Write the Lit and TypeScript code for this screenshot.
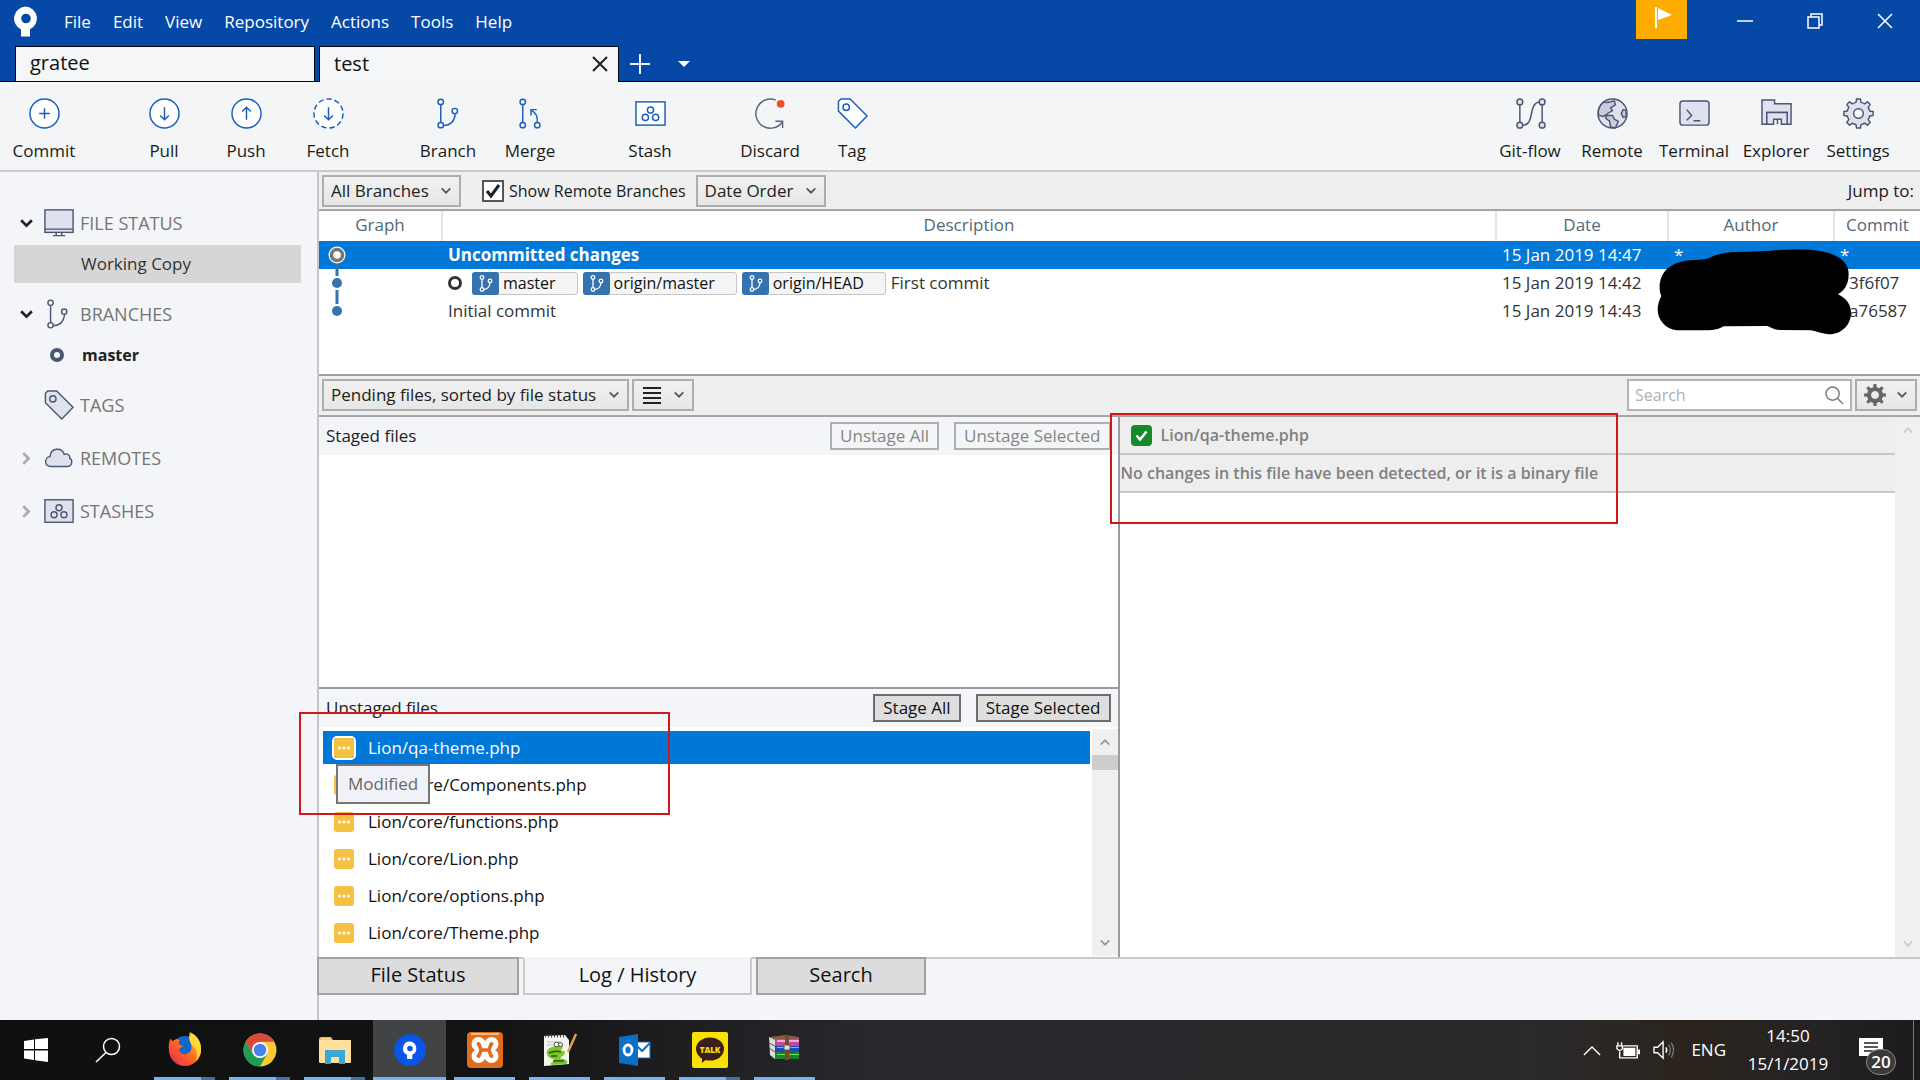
import { LitElement, html, svg, css, nothing } from "lit";
import { customElement, property } from "lit/decorators.js";
import { classMap } from "lit/directives/class-map.js";

/* ---------- icons ---------- */

const gearPath = (cx: number, cy: number, outer: number, inner: number, teeth: number) => {
  const step = (Math.PI * 2) / teeth;
  const at = (r: number, a: number) => `${(cx + r * Math.sin(a)).toFixed(2)} ${(cy - r * Math.cos(a)).toFixed(2)}`;
  let d = "";
  for (let i = 0; i < teeth; i++) {
    const a = i * step;
    d += `${i ? "L" : "M"}${at(inner, a - step * 0.28)}L${at(outer, a - step * 0.17)}L${at(outer, a + step * 0.17)}L${at(inner, a + step * 0.28)}`;
    d += `A${inner} ${inner} 0 0 1 ${at(inner, a + step * 0.72)}`;
  }
  return d + "Z";
};

const stashDots = svg`<circle cx="16" cy="12.5" r="3.2"/><circle cx="10.7" cy="20" r="3.2"/><circle cx="21.3" cy="20" r="3.2"/>`;
const branchShape = svg`<path d="M6 6.5v19M9 28.500c7 0 11-5 12-11.500"/><circle cx="6" cy="4" r="2.800"/><circle cx="6" cy="28" r="2.800"/><circle cx="20.500" cy="13.500" r="2.800"/>`;
const tagShape = svg`<path d="M1.500 3.500 4 1h9.500L31 18.500 19 31 1.500 13.500Z"/><circle cx="9.500" cy="9.500" r="3.300"/>`;

const icons: Record<string, unknown> = {
  commit: svg`<circle cx="16" cy="16" r="15" fill="#fff"/><path d="M16 10.500v11M10.500 16h11"/>`,
  pull: svg`<circle cx="16" cy="16" r="15" fill="#fff"/><path d="M16 9.500v13M11.500 18l4.500 4.500 4.500-4.500"/>`,
  push: svg`<circle cx="16" cy="16" r="15" fill="#fff"/><path d="M16 22.500v-13M11.500 14l4.500-4.500 4.500 4.500"/>`,
  fetch: svg`<circle cx="16" cy="16" r="15" fill="#fff" stroke-dasharray="5.500 3"/><path d="M16 9.500v13M11.500 18l4.500 4.500 4.500-4.500"/>`,
  branch: svg`<g transform="translate(2 0)">${branchShape}</g>`,
  merge: svg`<path d="M8 7v18M23 25C23.500 19 21 15 17.500 13M16.500 18v-6h6"/><circle cx="8" cy="4" r="2.800"/><circle cx="8" cy="28" r="2.800"/><circle cx="23" cy="28" r="2.800"/>`,
  stash: svg`<rect x="1" y="4" width="30" height="24" fill="#fff"/>${stashDots}`,
  discard: svg`<path stroke="#5a6478" d="M21.500 2.200A15 15 0 1 0 28 25M21 24h7.500v7"/><circle cx="26.500" cy="6" r="4" fill="#f04e23" stroke="none"/>`,
  tag: svg`<g fill="#fff">${tagShape}</g>`,
  gitflow: svg`<path d="M5 7v18M28 7v18M8 28c13 0 5-22 17-24"/><g fill="#dde2ee"><circle cx="5" cy="4" r="3"/><circle cx="5" cy="28" r="3"/><circle cx="28" cy="4" r="3"/><circle cx="28" cy="28" r="3"/></g>`,
  remote: svg`<circle cx="16" cy="16" r="15" fill="#dde2ee"/><path fill="#c6cede" d="M7 4c4 2 8-1 11-1l1 4-5 3 2 3-5 3-4 3-5-1C0 13 3 7 7 4ZM10 18l6 0 2 4 4 2-3 7-5-1-1-6-4-3ZM30 13l-3-1-2 4 2 4 3-1Z"/>`,
  terminal: svg`<rect x="1" y="3" width="30" height="25" rx="3" fill="#dde2ee"/><path d="M8 12l5 6-5 5M15 23.500h7"/>`,
  explorer: svg`<path fill="#dde2ee" d="M1 27V2h13v4h17v21h-4V15H6v12Z"/><path fill="#dde2ee" d="M6 15h21v12h-6v-5h-8v5H6Z"/><path d="M17 22v5"/>`,
  settings: svg`<path fill="#dde2ee" stroke-linejoin="round" d=${gearPath(16, 16, 15.2, 11.8, 8)}/><circle cx="16" cy="16" r="5" fill="#f4f6f8"/>`,
  monitor: svg`<rect x="1" y="2" width="30" height="24" fill="#dde2ee"/><path d="M1 22.500h30M13 26v3M19 26v3M9.500 29.500h13"/>`,
  sideBranch: svg`<g fill="none" transform="translate(1 0)">${branchShape}</g>`,
  sideTag: svg`<g fill="#dde2ee">${tagShape}</g>`,
  cloud: svg`<path fill="#dde2ee" d="M7.500 25C0 25 0 15 6.500 14.500 7 5 19 4 21.500 12 26 10.500 28 14 27.500 16.500 31 18 30 25 25.500 25Z"/>`,
  sideStash: svg`<rect x="1" y="4" width="30" height="24" fill="#dde2ee"/>${stashDots}`,
};

const icon = (name: string) => html`<svg class="icon" viewBox="0 0 32 32" aria-hidden="true">${icons[name]}</svg>`;

const chevron = (dir: "down" | "up" | "right" = "down") => {
  const d = { down: "M2 4l5 5 5-5", up: "M2 10l5-5 5 5", right: "M4 2l5 5-5 5" }[dir];
  return html`<svg class="chev" viewBox="0 0 14 14" aria-hidden="true"><path d=${d} /></svg>`;
};

const logoShape = svg`<path fill-rule="evenodd" d="M12 0a12 12 0 0 0-5 22.900V30h9v-7.200A12 12 0 0 0 12 0Zm0 7.200a4.800 4.800 0 1 1 0 9.600 4.800 4.800 0 0 1 0-9.600Z"/>`;

/* ---------- shared styles ---------- */

const base = css`
  * {
    box-sizing: border-box;
  }
  button,
  input,
  select {
    font: inherit;
    color: inherit;
    margin: 0;
    padding: 0;
    border: 0;
    background: none;
  }
  ul {
    list-style: none;
    margin: 0;
    padding: 0;
  }
  .icon {
    width: 31px;
    height: 31px;
    fill: none;
    stroke: currentColor;
    stroke-width: 1.5;
    display: block;
    overflow: visible;
  }
  .chev {
    width: 12px;
    height: 12px;
    fill: none;
    stroke: currentColor;
    stroke-width: 2;
    display: block;
  }
`;

/* ---------- title bar ---------- */

@customElement("title-bar")
class TitleBar extends LitElement {
  static styles = [
    base,
    css`
      :host {
        display: block;
        background: #0648a6;
        color: #fff;
      }
      .top {
        display: flex;
        height: 46px;
        align-items: flex-start;
      }
      .logo {
        width: 24px;
        height: 31px;
        margin: 6px 15px 0 14px;
        fill: #fff;
      }
      nav {
        display: flex;
        flex: 1;
        height: 46px;
        align-items: center;
        padding-bottom: 2px;
      }
      nav button {
        padding: 0 11px;
      }
      .flag {
        width: 51px;
        height: 39px;
        background: #ffac00;
      }
      .flag svg {
        width: 51px;
        height: 39px;
        display: block;
      }
      .win {
        width: 70px;
        height: 42px;
        display: grid;
        place-items: center;
      }
      .windows {
        display: flex;
        padding-left: 23px;
      }
      .windows svg {
        width: 16px;
        height: 16px;
        fill: none;
        stroke: #fff;
        stroke-width: 1.5;
      }
      .tabs {
        display: flex;
        height: 36px;
        padding-left: 15px;
        gap: 4px;
        background: linear-gradient(#000, #000) bottom / 100% 1px no-repeat;
      }
      .tab {
        width: 300px;
        display: flex;
        align-items: center;
        justify-content: space-between;
        padding: 0 10px 2px 14px;
        border: 1px solid #000814;
        background: #f4f6f8;
        color: #111;
        font-size: 20px;
      }
      .tab.on {
        border-bottom: 0;
      }
      .tab svg {
        width: 16px;
        height: 16px;
        stroke: #222;
        stroke-width: 2;
        display: block;
      }
      .add {
        width: 34px;
        display: grid;
        place-items: center;
      }
      .add svg {
        width: 20px;
        height: 20px;
        stroke: #e8f4ff;
        stroke-width: 2;
      }
      .add.more {
        width: 46px;
      }
      .add.more svg {
        width: 12px;
        height: 8px;
        fill: #fff;
        stroke: none;
      }
    `,
  ];
  render() {
    return html`
      <div class="top">
        <svg class="logo" viewBox="0 0 24 30" aria-hidden="true">${logoShape}</svg>
        <nav>
          ${["File", "Edit", "View", "Repository", "Actions", "Tools", "Help"].map((m) => html`<button>${m}</button>`)}
        </nav>
        <button class="flag" aria-label="Notifications">
          <svg viewBox="0 0 51 39"><path d="M19 7h2v21h-2zM22 8l14 7-14 5z" fill="#fff" /></svg>
        </button>
        <div class="windows">
          <button class="win" aria-label="Minimize"><svg viewBox="0 0 16 16"><path d="M0 8h16" /></svg></button>
          <button class="win" aria-label="Restore"><svg viewBox="0 0 16 16"><path d="M1 4h11v11H1zM4 4V1h11v11h-3" /></svg></button>
          <button class="win" aria-label="Close"><svg viewBox="0 0 16 16"><path d="M1 1l14 14M15 1L1 15" /></svg></button>
        </div>
      </div>
      <div class="tabs">
        <div class="tab"><span>gratee</span></div>
        <div class="tab on">
          <span>test</span>
          <button aria-label="Close tab"><svg viewBox="0 0 16 16"><path d="M1 1l14 14M15 1L1 15" /></svg></button>
        </div>
        <button class="add" aria-label="New tab"><svg viewBox="0 0 20 20"><path d="M10 0v20M0 10h20" /></svg></button>
        <button class="add more" aria-label="Tab list"><svg viewBox="0 0 12 8"><path d="M0 1h12L6 7z" /></svg></button>
      </div>
    `;
  }
}

/* ---------- toolbar ---------- */

type Tool = [string, string];
const leftTools: Tool[][] = [
  [["commit", "Commit"]],
  [["pull", "Pull"], ["push", "Push"], ["fetch", "Fetch"]],
  [["branch", "Branch"], ["merge", "Merge"]],
  [["stash", "Stash"]],
  [["discard", "Discard"], ["tag", "Tag"]],
];
const rightTools: Tool[] = [
  ["gitflow", "Git-flow"],
  ["remote", "Remote"],
  ["terminal", "Terminal"],
  ["explorer", "Explorer"],
  ["settings", "Settings"],
];

@customElement("tool-bar")
class ToolBar extends LitElement {
  static styles = [
    base,
    css`
      :host {
        display: flex;
        justify-content: space-between;
        padding: 16px 21px 6px 3px;
        border-bottom: 2px solid #c8cacc;
        background: #f3f5f7;
      }
      .left {
        display: flex;
        gap: 38px;
      }
      .group {
        display: flex;
      }
      button {
        width: 82px;
        display: flex;
        flex-direction: column;
        align-items: center;
        gap: 9px;
        line-height: 26px;
        white-space: nowrap;
      }
      .icon {
        color: #1a5dbb;
      }
      .right .icon {
        color: #4b5670;
      }
    `,
  ];
  tool = ([name, label]: Tool) => html`<button>${icon(name)}<span>${label}</span></button>`;
  render() {
    return html`
      <div class="left">${leftTools.map((g) => html`<div class="group">${g.map(this.tool)}</div>`)}</div>
      <div class="group right">${rightTools.map(this.tool)}</div>
    `;
  }
}

/* ---------- sidebar ---------- */

@customElement("side-bar")
class SideBar extends LitElement {
  static styles = [
    base,
    css`
      :host {
        display: flex;
        flex-direction: column;
        padding: 29px 16px 0 14px;
        background: #f3f5f8;
        border-right: 2px solid #c4c6c9;
      }
      .head {
        display: grid;
        grid-template-columns: 24px 30px auto;
        column-gap: 6px;
        align-items: center;
        justify-items: center;
        justify-content: start;
        height: 44px;
        color: #757575;
        font-size: 18px;
        font-weight: 500;
      }
      .head .icon {
        width: 30px;
        height: 30px;
        color: #4b5670;
      }
      .chev {
        width: 15px;
        height: 15px;
        color: #aaa;
        stroke-width: 2.5;
      }
      .open .chev {
        color: #222;
      }
      .item {
        display: flex;
        align-items: center;
        width: 100%;
        height: 38px;
        padding-left: 67px;
        color: #333;
      }
      .on {
        background: #d6d6d6;
      }
      .current {
        font-size: 16px;
        font-weight: 700;
        color: #222;
        gap: 18px;
        padding-left: 36px;
      }
      .ring {
        width: 14px;
        height: 14px;
        border: 4px solid #4b5670;
        border-radius: 50%;
      }
      .section {
        margin-bottom: 9px;
      }
    `,
  ];
  section(name: string, label: string, state: "open" | "closed" | "none", body: unknown = nothing) {
    return html`<div class=${classMap({ section: true, open: state === "open" })}>
      <button class="head">
        <span>${state === "none" ? nothing : chevron(state === "open" ? "down" : "right")}</span>
        ${icon(name)}<span>${label}</span>
      </button>
      ${body}
    </div>`;
  }
  render() {
    return html`
      ${this.section("monitor", "FILE STATUS", "open", html`<button class="item on">Working Copy</button>`)}
      ${this.section("sideBranch", "BRANCHES", "open", html`<button class="item current"><span class="ring"></span>master</button>`)}
      ${this.section("sideTag", "TAGS", "none")} ${this.section("cloud", "REMOTES", "closed")}
      ${this.section("sideStash", "STASHES", "closed")}
    `;
  }
}

/* ---------- drop-down ---------- */

@customElement("drop-down")
class DropDown extends LitElement {
  @property() label = "";
  @property() value = "";
  static styles = [
    base,
    css`
      :host {
        display: grid;
        align-items: center;
      }
      select,
      .chev {
        grid-area: 1 / 1;
      }
      select {
        appearance: none;
        height: 32px;
        padding: 0 30px 0 7px;
        border: 2px solid #adadad;
        background: linear-gradient(#f1f1f1, #e6e6e6);
        color: #222;
      }
      .chev {
        justify-self: end;
        margin-right: 9px;
        pointer-events: none;
        color: #555;
      }
    `,
  ];
  render() {
    return html`<select aria-label=${this.label}><option>${this.value}</option></select>${chevron()}`;
  }
}

/* ---------- commit log ---------- */

@customElement("commit-log")
class CommitLog extends LitElement {
  static styles = [
    base,
    css`
      :host {
        display: block;
      }
      .filters {
        display: flex;
        align-items: center;
        height: 39px;
        padding: 0 6px 0 3px;
        background: #efefef;
        border-bottom: 2px solid #a5a5a5;
      }
      .check {
        display: flex;
        align-items: center;
        gap: 5px;
        margin: 0 10px 0 21px;
        font-size: 16px;
      }
      .check input {
        appearance: none;
        width: 22px;
        height: 22px;
        border: 2px solid #555;
        background: #fff;
      }
      .box {
        display: grid;
      }
      .box > * {
        grid-area: 1 / 1;
      }
      .box svg {
        width: 22px;
        height: 22px;
        fill: none;
        stroke: #222;
        stroke-width: 3;
        pointer-events: none;
      }
      .jump {
        margin-left: auto;
      }
      .log {
        position: relative;
        height: 165px;
        background: #fff;
        border-bottom: 2px solid #a0a0a0;
      }
      table {
        width: 100%;
        table-layout: fixed;
        border-collapse: collapse;
        color: #333;
      }
      .c-graph { width: 123px; }
      .c-date { width: 172px; }
      .c-author { width: 166px; }
      .c-commit { width: 86px; }
      th {
        height: 30px;
        padding: 0 0 2px;
        font-weight: 400;
        color: #51687a;
        border-right: 2px solid #e3e6e8;
      }
      th:last-child {
        border-right: 0;
      }
      td {
        height: 28px;
        padding: 0 0 0 6px;
        white-space: nowrap;
        line-height: 24px;
      }
      .sel {
        background: #0078d7;
        color: #fff;
      }
      .sel b {
        font-weight: 700;
      }
      .g {
        padding: 0;
      }
      .g svg {
        width: 36px;
        height: 28px;
        display: block;
      }
      .tail {
        padding-left: 15px;
      }
      .refs {
        display: flex;
        align-items: center;
        gap: 5px;
      }
      .head {
        width: 14px;
        height: 14px;
        border: 3px solid #333;
        border-radius: 50%;
        margin-right: 5px;
      }
      .ref {
        display: flex;
        align-items: center;
        height: 23px;
        padding-right: 21px;
        gap: 4px;
        border: 1px solid #c6c6c6;
        border-radius: 3px;
        background: #f5f5f5;
        color: #111;
        font-size: 16px;
      }
      .ref svg {
        width: 27px;
        height: 23px;
        margin-left: -1px;
        border-radius: 3px;
        background: #3572b0;
        fill: none;
        stroke: #fff;
        stroke-width: 1.3;
      }
      .scribble {
        position: absolute;
        right: 68px;
        top: 38px;
        width: 195px;
        height: 86px;
      }
    `,
  ];
  ref(name: string) {
    return html`<span class="ref"
      ><svg viewBox="0 0 27 23" aria-hidden="true">
        <path d="M10 7v9M11.500 17.500c4 0 6-3 6.500-6.500" />
        <circle cx="10" cy="5.500" r="1.800" /><circle cx="10" cy="17.500" r="1.800" /><circle cx="18" cy="9" r="1.800" /></svg
      >${name}</span
    >`;
  }
  render() {
    return html`
      <div class="filters">
        <drop-down label="Branches" value="All Branches"></drop-down>
        <label class="check"
          ><span class="box"
            ><input type="checkbox" checked /><svg viewBox="0 0 22 22"><path d="M5 11l4 5 8-11" /></svg></span
          >Show Remote Branches</label
        >
        <drop-down label="Order" value="Date Order"></drop-down>
        <span class="jump">Jump to:</span>
      </div>
      <div class="log">
        <table>
          <colgroup>
            <col class="c-graph" /><col /><col class="c-date" /><col class="c-author" /><col class="c-commit" />
          </colgroup>
          <thead>
            <tr><th>Graph</th><th>Description</th><th>Date</th><th>Author</th><th>Commit</th></tr>
          </thead>
          <tbody>
            <tr class="sel">
              <td class="g">
                <svg viewBox="0 0 36 28"><path d="M18 20v8" stroke="#3572b0" stroke-width="3" /><circle cx="18" cy="14" r="6" fill="#fff" stroke="#fff" stroke-width="5" /><circle cx="18" cy="14" r="5.500" fill="#fff" stroke="#777" stroke-width="3.500" /></svg>
              </td>
              <td><b>Uncommitted changes</b></td>
              <td>15 Jan 2019 14:47</td>
              <td>*</td>
              <td>*</td>
            </tr>
            <tr>
              <td class="g">
                <svg viewBox="0 0 36 28"><path d="M18 0v7M18 21v7" stroke="#3572b0" stroke-width="3" /><circle cx="18" cy="14" r="5" fill="#3572b0" /></svg>
              </td>
              <td>
                <div class="refs"><span class="head"></span>${["master", "origin/master", "origin/HEAD"].map(this.ref)}<span>First commit</span></div>
              </td>
              <td>15 Jan 2019 14:42</td>
              <td></td>
              <td class="tail">3f6f07</td>
            </tr>
            <tr>
              <td class="g">
                <svg viewBox="0 0 36 28"><path d="M18 0v7" stroke="#3572b0" stroke-width="3" /><circle cx="18" cy="14" r="5" fill="#3572b0" /></svg>
              </td>
              <td>Initial commit</td>
              <td>15 Jan 2019 14:43</td>
              <td></td>
              <td class="tail">a76587</td>
            </tr>
          </tbody>
        </table>
        <svg class="scribble" viewBox="650 148 585 258" aria-hidden="true">
          <path
            d="M658 265C658 215 690 190 745 182C770 180 790 181 805 176C840 158 870 156 920 156C960 154 980 156 1000 152C1040 149 1070 149 1110 150C1180 156 1225 180 1225 222C1225 255 1212 272 1193 284C1225 300 1232 320 1232 342C1230 380 1200 404 1165 404C1145 402 1130 396 1112 392L1020 391C1000 390 992 383 980 379L850 380C838 386 830 391 805 392L710 392C675 388 652 360 652 330C652 315 657 300 663 290C660 282 658 275 658 265Z"
          />
        </svg>
      </div>
    `;
  }
}

/* ---------- changed files + diff ---------- */

const unstaged = ["Lion/qa-theme.php", "Lion/core/Components.php", "Lion/core/functions.php", "Lion/core/Lion.php", "Lion/core/options.php", "Lion/core/Theme.php"];

@customElement("file-panes")
class FilePanes extends LitElement {
  static styles = [
    base,
    css`
      :host {
        display: flex;
        flex-direction: column;
        flex: 1;
      }
      .options {
        display: flex;
        align-items: center;
        gap: 3px;
        height: 41px;
        padding: 0 3px 1px 3px;
        background: #efefef;
        border-bottom: 2px solid #a5a5a5;
      }
      .drop {
        display: flex;
        align-items: center;
        justify-content: space-between;
        width: 62px;
        height: 32px;
        padding: 0 7px;
        border: 2px solid #adadad;
        background: linear-gradient(#f1f1f1, #e6e6e6);
        color: #555;
      }
      .drop .glyph {
        width: 22px;
        height: 22px;
      }
      .search {
        display: flex;
        align-items: center;
        width: 225px;
        height: 32px;
        margin-left: auto;
        padding: 0 6px;
        border: 2px solid #b4b4b4;
        background: #fff;
        font-size: 16px;
      }
      .search input {
        flex: 1;
        min-width: 0;
        outline: 0;
      }
      .search input::placeholder {
        color: #b0b0b0;
        opacity: 1;
      }
      .search svg {
        width: 19px;
        height: 19px;
        fill: none;
        stroke: #777;
        stroke-width: 1.5;
      }
      .panes {
        display: grid;
        grid-template-columns: 1fr 1fr;
        flex: 1;
      }
      .files {
        display: grid;
        grid-template-rows: 1fr 1fr;
        border-right: 2px solid #999b9e;
        background: #fff;
      }
      .files section {
        position: relative;
        display: flex;
        flex-direction: column;
      }
      .files section + section {
        border-top: 2px solid #999b9e;
      }
      header {
        display: flex;
        align-items: center;
        gap: 15px;
        height: 38px;
        padding: 0 7px 0 7px;
        background: #f3f5f8;
      }
      h2 {
        flex: 1;
        margin: 0;
        font-size: inherit;
        font-weight: 400;
        color: #222;
      }
      .act {
        height: 28px;
        padding: 0 8px;
        line-height: 22px;
        border: 2px solid #6d6d6d;
        background: #dedede;
        color: #111;
      }
      .act:disabled {
        border-color: #adb0b3;
        background: #f4f5f6;
        color: #858585;
      }
      .body {
        display: flex;
        flex: 1;
        gap: 2px;
        padding: 2px 0 1px 4px;
      }
      .list {
        display: flex;
        flex: 1;
        flex-direction: column;
        gap: 4px;
        padding-top: 2px;
      }
      .file {
        display: flex;
        align-items: center;
        gap: 12px;
        width: 100%;
        height: 33px;
        padding-left: 9px;
        color: #111;
      }
      .file.sel {
        background: #0078d7;
        color: #fff;
      }
      .mod {
        width: 24px;
        height: 24px;
        border: 2px solid transparent;
        border-radius: 5px;
      }
      .sel .mod {
        border-color: #fff;
      }
      .mod svg {
        display: block;
        width: 20px;
        height: 20px;
        border-radius: 3px;
        background: #f5c142;
        fill: #fff;
      }
      .bar {
        display: flex;
        flex-direction: column;
        width: 26px;
        background: #f0f0f0;
        color: #999;
      }
      .bar button {
        height: 26px;
        display: grid;
        place-items: center;
      }
      .track {
        flex: 1;
      }
      .thumb {
        height: 15px;
        background: #cdcdcd;
      }
      .tip {
        position: absolute;
        left: 17px;
        top: 75px;
        padding: 8px 10px;
        line-height: 20px;
        border: 2px solid #767676;
        background: #f1f2f7;
        color: #666;
      }
      .mark {
        position: absolute;
        border: 2px solid #d01818;
        pointer-events: none;
        z-index: 2;
      }
      .mark.status {
        left: -20px;
        top: 23px;
        width: 371px;
        height: 103px;
      }
      .mark.message {
        left: -10px;
        top: -4px;
        width: 508px;
        height: 111px;
      }
      .diff {
        position: relative;
        display: flex;
        background: #fff;
      }
      .text {
        flex: 1;
      }
      .row {
        display: flex;
        align-items: center;
        gap: 9px;
        height: 38px;
        padding-left: 1px;
        background: #eee;
        border-bottom: 2px solid #c9c9c9;
        color: #808080;
        font-size: 16px;
        font-weight: 600;
      }
      .row.name {
        padding-left: 11px;
      }
      .row svg {
        width: 21px;
        height: 21px;
        border-radius: 4px;
        background: #148a2c;
        fill: none;
        stroke: #fff;
        stroke-width: 2.5;
      }
      .diff .bar {
        width: 25px;
        color: #ccc;
      }
    `,
  ];
  render() {
    return html`
      <div class="options">
        <drop-down label="Sort" value="Pending files, sorted by file status"></drop-down>
        <button class="drop" aria-label="View">
          <svg class="glyph" viewBox="0 0 22 22"><path d="M2 4h18M2 9h18M2 14h18M2 19h18" stroke="#222" stroke-width="2" /></svg>${chevron()}
        </button>
        <label class="search"
          ><input placeholder="Search" aria-label="Search" /><svg viewBox="0 0 20 20"><circle cx="8" cy="8" r="7" /><path d="M13 13l6 6" /></svg
        ></label>
        <button class="drop" aria-label="Diff options">
          <svg class="glyph" viewBox="0 0 22 22"><path fill="#666" fill-rule="evenodd" d=${gearPath(11, 11, 11, 8, 8) + "M11 7a4 4 0 1 0 .01 0Z"} /></svg>${chevron()}
        </button>
      </div>
      <div class="panes">
        <div class="files">
          <section>
            <header>
              <h2>Staged files</h2>
              <button class="act" disabled>Unstage All</button><button class="act" disabled>Unstage Selected</button>
            </header>
          </section>
          <section>
            <header>
              <h2>Unstaged files</h2>
              <button class="act">Stage All</button><button class="act">Stage Selected</button>
            </header>
            <div class="body">
              <ul class="list">
                ${unstaged.map(
                  (f, i) => html`<li>
                    <button class=${classMap({ file: true, sel: i === 0 })}>
                      <span class="mod"
                        ><svg viewBox="0 0 20 20" aria-hidden="true"><circle cx="5.500" cy="10" r="1.500" /><circle cx="10" cy="10" r="1.500" /><circle cx="14.500" cy="10" r="1.500" /></svg></span
                      >${f}
                    </button>
                  </li>`
                )}
              </ul>
              <div class="bar">
                <button aria-label="Scroll up">${chevron("up")}</button>
                <div class="track"><div class="thumb"></div></div>
                <button aria-label="Scroll down">${chevron()}</button>
              </div>
            </div>
            <div class="tip" role="tooltip">Modified</div>
            <div class="mark status"></div>
          </section>
        </div>
        <div class="diff">
          <div class="text">
            <div class="row name">
              <svg viewBox="0 0 21 21" aria-hidden="true"><path d="M5.500 10.500l3.500 4 6.500-8" /></svg>Lion/qa-theme.php
            </div>
            <div class="row">No changes in this file have been detected, or it is a binary file</div>
          </div>
          <div class="bar">
            <button aria-label="Scroll up">${chevron("up")}</button>
            <div class="track"></div>
            <button aria-label="Scroll down">${chevron()}</button>
          </div>
          <div class="mark message"></div>
        </div>
      </div>
    `;
  }
}

/* ---------- taskbar ---------- */

const apps: { name: string; split?: boolean; active?: boolean; art: unknown }[] = [
  {
    name: "Firefox",
    split: true,
    art: svg`<defs><linearGradient id="ff" x1="0" y1="1" x2="1" y2="0"><stop offset="0" stop-color="#e8205c"/><stop offset=".5" stop-color="#ff6a1f"/><stop offset="1" stop-color="#ffe03a"/></linearGradient></defs>
      <circle cx="18" cy="17" r="13" fill="#1166c8"/><path fill="url(#ff)" d="M4 6c0 2 1 3 2 3 2-2 5-2 7-1-2 1-2 3 0 5l3 1c-1 2-4 2-4 4 2 6 10 5 12 0 2-5-2-8-1-13 2-3 1-4 1-4 8 4 10 10 10 16a16 16 0 0 1-32 2C1 14 2 9 4 6Z"/><path fill="#ffe63a" d="M23 0c8 4 11 11 11 17 0 6-3 10-5 12 2-7 1-11-3-15-4-4-5-9-3-14Z" opacity=".8"/>`,
  },
  {
    name: "Chrome",
    split: true,
    art: svg`<circle cx="18" cy="18" r="16.500" fill="#fcc934"/><path fill="#d94a3d" d="M3.700 9.800A16.500 16.500 0 0 1 32.300 9.800H18L10.900 22Z"/><path fill="#1e9b55" d="M3.700 9.800A16.500 16.500 0 0 0 18 34.500L25.100 22H10.900Z"/><circle cx="18" cy="18" r="8" fill="#fff"/><circle cx="18" cy="18" r="6.300" fill="#4a80ea"/>`,
  },
  {
    name: "File Explorer",
    split: true,
    art: svg`<path fill="#e9b84e" d="M2 7q0-2 2-2h10l2 3h18v6H2Z"/><rect x="2" y="8" width="32" height="23" rx="1" fill="#ffe09a"/><path fill="#fbd36c" d="M4 6h9v2H4z"/><path fill="#3ba7d6" d="M8 18h20v14h-6v-7h-8v7H8Z"/>`,
  },
  {
    name: "Sourcetree",
    active: true,
    art: svg`<circle cx="18" cy="18" r="16" fill="#0a55e8"/><g transform="translate(11 9.500) scale(.58)" fill="#fff">${logoShape}</g>`,
  },
  {
    name: "XAMPP",
    art: svg`<rect width="36" height="36" rx="4" fill="#e06c1c"/><path d="M4 2h28" stroke="#f6b98a" stroke-width="2"/><g fill="none" stroke="#fff" stroke-width="5" stroke-linejoin="round"><circle cx="11.500" cy="12" r="4.500"/><circle cx="24.500" cy="12" r="4.500"/><circle cx="11.500" cy="24" r="4.500"/><circle cx="24.500" cy="24" r="4.500"/></g><path d="M12 18h12" stroke="#fff" stroke-width="7"/><path d="M12 12l2 6-2 6M24 12l-2 6 2 6M14 18h8" fill="none" stroke="#e06c1c" stroke-width="3.500"/>`,
  },
  {
    name: "Notepad++",
    art: svg`<path fill="#f4f4f0" d="M2 4l21-1 4 5v24L2 34Z"/><path d="M3 4h20" stroke="#444" stroke-width="3" stroke-dasharray="1 2"/><path d="M5 10h14M5 13h9" stroke="#bbb"/><path fill="#7dc62c" d="M5 19c2-5 7-3 9-6 1-4 7-3 7 1l-2 5c4-1 5 2 3 4l-4 3 6 2c2 1 2 3 0 4l-14 1c-2-1-2-2 1-3l1-3c-5 0-8-4-7-8Z"/><circle cx="14.500" cy="12.500" r="2.300" fill="#fff" stroke="#333" stroke-width=".8"/><circle cx="18.500" cy="12.500" r="2" fill="#fff" stroke="#333" stroke-width=".8"/><path d="M7 21q6-3 12-1M9 24h6M11 29h11" fill="none" stroke="#265a10" stroke-width="1.500"/><path d="M34 2L26 20" stroke="#e0a04a" stroke-width="2.500"/>`,
  },
  {
    name: "Outlook",
    art: svg`<rect x="16" y="10" width="17" height="16" fill="#fff" stroke="#0a72c6"/><path d="M18 12l7 7 8-8" fill="none" stroke="#0a72c6" stroke-width="2"/><path fill="#0a72c6" d="M2 5l19-3v32L2 31Z"/><ellipse cx="11" cy="18" rx="4" ry="5" fill="none" stroke="#fff" stroke-width="2.800"/>`,
  },
  {
    name: "KakaoTalk",
    split: true,
    art: svg`<rect width="36" height="36" rx="2" fill="#fae100"/><ellipse cx="18" cy="17" rx="14" ry="11.500" fill="#3b1e1e"/><path fill="#3b1e1e" d="M10 24h8l-8 7Z"/><text class="talk" x="18" y="20.500" text-anchor="middle" fill="#fae100">TALK</text>`,
  },
  {
    name: "WinRAR",
    art: svg`<path fill="#8c5a4a" d="M3 5l16-2 13 2v7H9Z"/><path fill="#c44b9a" d="M7 7h25v7H7z"/><path fill="#f2a9da" d="M10 8h22v2H10z"/><path fill="#1e49b8" d="M7 14h25v6H7z"/><path fill="#79b4ff" d="M10 15h22v1H10z"/><path fill="#1c7f2c" d="M7 20h25v7H7z"/><path fill="#6be06c" d="M10 22h22v1H10z"/><path fill="#ddd" d="M2 5l6 3v19l-5-4Z"/><path stroke="#555" d="M2 11l6 3M2 16l6 4"/><path fill="#7a4a26" d="M18 3h4v25h-4z"/><rect x="17" y="13" width="6" height="5" fill="#ddd" stroke="#555"/>`,
  },
];

@customElement("task-bar")
class TaskBar extends LitElement {
  static styles = [
    base,
    css`
      :host {
        display: flex;
        height: 60px;
        background: linear-gradient(90deg, #0e0f10 0%, #131314 25%, #28272b 45%, #2a292b 80%, #2b241c 88%, #242225 95%, #1c1a19 100%);
        color: #fff;
      }
      .plain {
        width: 72px;
        display: grid;
        place-items: center;
      }
      .plain svg {
        width: 26px;
        height: 26px;
        display: block;
      }
      .apps {
        display: flex;
        padding-left: 4px;
      }
      .app {
        position: relative;
        width: 75px;
        height: 60px;
        display: grid;
        place-items: center;
        padding-right: 2px;
      }
      .app > svg {
        width: 36px;
        height: 36px;
        display: block;
      }
      .app::after {
        content: "";
        position: absolute;
        left: 6px;
        right: 8px;
        bottom: 0;
        height: 3px;
        background: #7cb2e6;
      }
      .app.split::after {
        background: linear-gradient(90deg, #7cb2e6 77%, #4a6f9c 77%);
      }
      .app.active {
        background: linear-gradient(#424345, #424345) 0 0 / 73px 100% no-repeat;
      }
      .app.active::after {
        left: 0;
        right: 2px;
      }
      .talk {
        font: 800 8px "Open Sans", sans-serif;
      }
      .tray {
        display: flex;
        align-items: center;
        margin-left: auto;
      }
      .tray svg {
        display: block;
        fill: none;
        stroke: #fff;
        stroke-width: 1.5;
      }
      .t-up {
        width: 18px;
        height: 11px;
        margin-right: 15px;
      }
      .t-bat {
        width: 24px;
        height: 17px;
        margin-right: 12px;
      }
      .t-vol {
        width: 24px;
        height: 20px;
        margin-right: 15px;
      }
      .clock {
        width: 96px;
        margin: 0 14px;
        text-align: center;
        line-height: 28px;
        padding-bottom: 1px;
      }
      .note {
        position: relative;
        display: flex;
        align-items: flex-start;
        width: 38px;
        height: 38px;
        margin: 12px 17px 0 8px;
      }
      .note svg {
        width: 26px;
        height: 24px;
      }
      .badge {
        position: absolute;
        right: 0;
        bottom: 0;
        width: 30px;
        height: 26px;
        line-height: 23px;
        border: 1px solid #8a8a8a;
        border-radius: 13px;
        background: #3a3a3a;
        font-weight: 600;
        text-align: center;
      }
      .edge {
        width: 7px;
        height: 60px;
        border-left: 1px solid #777;
      }
    `,
  ];
  render() {
    return html`
      <button class="plain" aria-label="Start">
        <svg viewBox="0 0 26 26"><path fill="#fff" d="M1 4l10-1.500V12H1ZM12 2.300L25 1v11H12ZM1 13.500h10V23L1 21.500ZM12 13.500h13V25L12 23.300Z" /></svg>
      </button>
      <button class="plain" aria-label="Search">
        <svg viewBox="0 0 26 26" fill="none" stroke="#fff" stroke-width="1.500"><circle cx="16.500" cy="9.500" r="8" /><path d="M11 15.500L1 25" /></svg>
      </button>
      <div class="apps">
        ${apps.map(
          (a) => html`<button class=${classMap({ app: true, split: !!a.split, active: !!a.active })} aria-label=${a.name}>
            <svg viewBox="0 0 36 36">${a.art}</svg>
          </button>`
        )}
      </div>
      <div class="tray">
        <svg class="t-up" viewBox="0 0 20 12"><path d="M1 11l9-9 9 9" /></svg>
        <svg class="t-bat" viewBox="0 0 26 18"><path fill="#fff" stroke="none" d="M8 6h13v9H8zM24 8h2v5h-2z" /><path d="M8 4h15v13H4v-7M2 0v4M6 0v4M1 4h6v3q-3 4-6 0Z" /></svg>
        <svg class="t-vol" viewBox="0 0 24 22"><path d="M1 8h4l6-6v18l-6-6H1Z" /><path d="M14 8q2 3 0 6" /><path d="M17 5q4 6 0 12M20 3q5 8 0 16" stroke="#777" /></svg>
        <span>ENG</span>
        <div class="clock"><div>14:50</div><div>15/1/2019</div></div>
        <button class="note" aria-label="Notifications">
          <svg viewBox="0 0 26 24"><path fill="#fff" stroke="none" d="M1 1h24v18H15l-5 4v-4H1Z" /><path stroke="#222" d="M6 6h14M6 10h14M6 14h9" /></svg>
          <span class="badge">20</span>
        </button>
        <div class="edge"></div>
      </div>
    `;
  }
}

/* ---------- page ---------- */

@customElement("app-root")
class AppRoot extends LitElement {
  static styles = [
    base,
    css`
      :host {
        display: flex;
        flex-direction: column;
        min-height: 100vh;
        background: #f3f5f8;
        color: #1a1a1a;
        font: 17px/22px "Open Sans", "Noto Sans", sans-serif;
      }
      .work {
        display: grid;
        grid-template-columns: 319px 1fr;
        flex: 1;
      }
      .main {
        display: flex;
        flex-direction: column;
        min-width: 0;
      }
      .views {
        display: flex;
        gap: 4px;
        height: 63px;
        margin-left: -2px;
        border-top: 2px solid #c6c8ca;
      }
      .view {
        height: 38px;
        margin-top: -2px;
        padding-bottom: 3px;
        border: 2px solid #a2a2a2;
        background: #dcdcdc;
        color: #111;
        font-size: 20px;
      }
      .view.on {
        border-color: #c8cacc;
        border-top-color: #f3f5f8;
        background: #f3f5f8;
      }
      .v1 { width: 202px; }
      .v2 { width: 229px; }
      .v3 { width: 170px; }
    `,
  ];
  render() {
    return html`
      <title-bar></title-bar>
      <tool-bar></tool-bar>
      <div class="work">
        <side-bar></side-bar>
        <div class="main">
          <commit-log></commit-log>
          <file-panes></file-panes>
          <div class="views">
            <button class="view v1">File Status</button>
            <button class="view v2 on">Log / History</button>
            <button class="view v3">Search</button>
          </div>
        </div>
      </div>
      <task-bar></task-bar>
    `;
  }
}
